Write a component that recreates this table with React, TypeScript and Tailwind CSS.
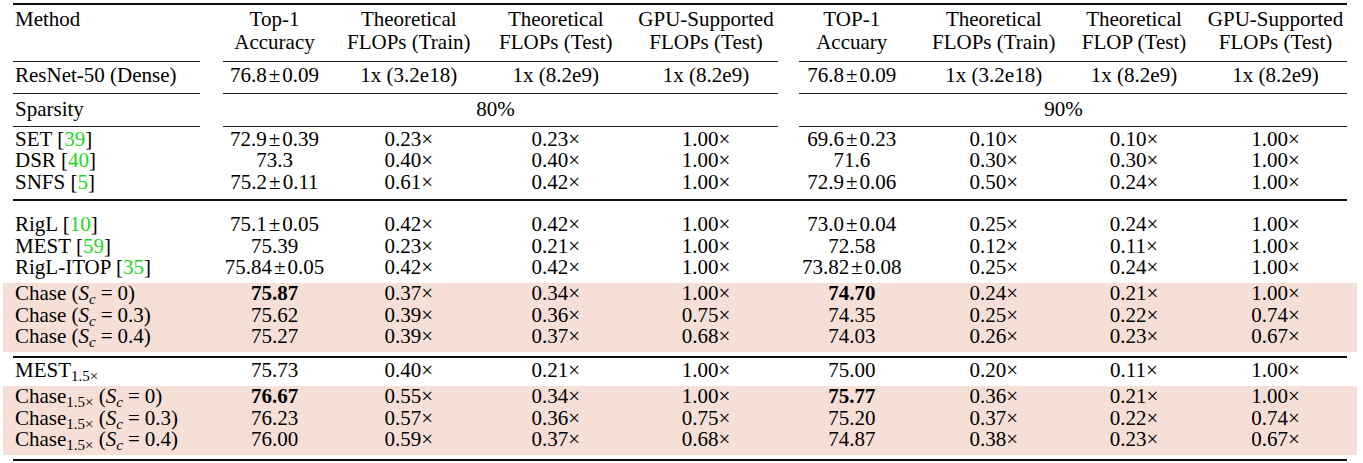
import React from 'react';

const cols =
  'grid grid-cols-[198px_127px_141.5px_152.5px_148px_143.5px_140.5px_140px_143px]';

type Row = {
  method: React.ReactNode;
  vals: React.ReactNode[];
  bold?: number[];
};

function Cite({ n }: { n: number }) {
  return (
    <>
      [<span className="text-[#1ed81e]">{n}</span>]
    </>
  );
}

function Pm({ a, b }: { a: string; b: string }) {
  return (
    <>
      {a}
      <span className="mx-[2px]">±</span>
      {b}
    </>
  );
}

function Sc({ v }: { v: string }) {
  return (
    <>
      (<span className="italic">S</span>
      <span className="text-[15px] italic leading-none align-[-4px]">c</span>
      <span className="mx-[5px]">=</span>
      {v})
    </>
  );
}

function X15() {
  return <span className="text-[15px] leading-none align-[-4px]">1.5×</span>;
}

const sectionA: Row[] = [
  {
    method: <>SET <Cite n={39} /></>,
    vals: [<Pm a="72.9" b="0.39" />, '0.23×', '0.23×', '1.00×', <Pm a="69.6" b="0.23" />, '0.10×', '0.10×', '1.00×'],
  },
  {
    method: <>DSR <Cite n={40} /></>,
    vals: ['73.3', '0.40×', '0.40×', '1.00×', '71.6', '0.30×', '0.30×', '1.00×'],
  },
  {
    method: <>SNFS <Cite n={5} /></>,
    vals: [<Pm a="75.2" b="0.11" />, '0.61×', '0.42×', '1.00×', <Pm a="72.9" b="0.06" />, '0.50×', '0.24×', '1.00×'],
  },
];

const sectionB: Row[] = [
  {
    method: <>RigL <Cite n={10} /></>,
    vals: [<Pm a="75.1" b="0.05" />, '0.42×', '0.42×', '1.00×', <Pm a="73.0" b="0.04" />, '0.25×', '0.24×', '1.00×'],
  },
  {
    method: <>MEST <Cite n={59} /></>,
    vals: ['75.39', '0.23×', '0.21×', '1.00×', '72.58', '0.12×', '0.11×', '1.00×'],
  },
  {
    method: <>RigL-ITOP <Cite n={35} /></>,
    vals: [<Pm a="75.84" b="0.05" />, '0.42×', '0.42×', '1.00×', <Pm a="73.82" b="0.08" />, '0.25×', '0.24×', '1.00×'],
  },
];

const chaseB: Row[] = [
  {
    method: <>Chase <Sc v="0" /></>,
    vals: ['75.87', '0.37×', '0.34×', '1.00×', '74.70', '0.24×', '0.21×', '1.00×'],
    bold: [0, 4],
  },
  {
    method: <>Chase <Sc v="0.3" /></>,
    vals: ['75.62', '0.39×', '0.36×', '0.75×', '74.35', '0.25×', '0.22×', '0.74×'],
  },
  {
    method: <>Chase <Sc v="0.4" /></>,
    vals: ['75.27', '0.39×', '0.37×', '0.68×', '74.03', '0.26×', '0.23×', '0.67×'],
  },
];

const mest15: Row = {
  method: <>MEST<X15 /></>,
  vals: ['75.73', '0.40×', '0.21×', '1.00×', '75.00', '0.20×', '0.11×', '1.00×'],
};

const chaseC: Row[] = [
  {
    method: <>Chase<X15 /> <Sc v="0" /></>,
    vals: ['76.67', '0.55×', '0.34×', '1.00×', '75.77', '0.36×', '0.21×', '1.00×'],
    bold: [0, 4],
  },
  {
    method: <>Chase<X15 /> <Sc v="0.3" /></>,
    vals: ['76.23', '0.57×', '0.36×', '0.75×', '75.20', '0.37×', '0.22×', '0.74×'],
  },
  {
    method: <>Chase<X15 /> <Sc v="0.4" /></>,
    vals: ['76.00', '0.59×', '0.37×', '0.68×', '74.87', '0.38×', '0.23×', '0.67×'],
  },
];

const header: [string, string][] = [
  ['Top-1', 'Accuracy'],
  ['Theoretical', 'FLOPs (Train)'],
  ['Theoretical', 'FLOPs (Test)'],
  ['GPU-Supported', 'FLOPs (Test)'],
  ['TOP-1', 'Accuary'],
  ['Theoretical', 'FLOPs (Train)'],
  ['Theoretical', 'FLOP (Test)'],
  ['GPU-Supported', 'FLOPs (Test)'],
];

function DataRow({ row }: { row: Row }) {
  return (
    <div className={`${cols} h-[21.5px] leading-[21.5px]`}>
      <div className="whitespace-nowrap pl-[2px]">{row.method}</div>
      {row.vals.map((v, i) => (
        <div
          key={i}
          className={`whitespace-nowrap text-center ${row.bold?.includes(i) ? 'font-bold' : ''}`}
        >
          {v}
        </div>
      ))}
    </div>
  );
}

function Shaded({ rows }: { rows: Row[] }) {
  return (
    <div className="-mx-[10px] bg-[#f5dfd6] px-[10px] pb-[4.5px]">
      {rows.map((r, i) => (
        <DataRow key={i} row={r} />
      ))}
    </div>
  );
}

function CmidRule() {
  return (
    <div className="flex h-px">
      <div className="w-[187px] bg-[#222]" />
      <div className="ml-[23px] w-[555px] bg-[#222]" />
      <div className="ml-[21px] w-[548px] bg-[#222]" />
    </div>
  );
}

export default function App() {
  return (
    <div className="h-[463px] w-[1363px] overflow-hidden bg-white font-['Liberation_Serif','Times_New_Roman',serif] text-[21px] text-black">
      <div className="ml-[13px] w-[1334px] pt-[3px]">
        <div className="h-[2px] bg-[#111]" />

        <div className={`${cols} pb-[7px] pt-[3px] leading-[23px]`}>
          <div className="pl-[2px]">Method</div>
          {header.map(([a, b], i) => (
            <div key={i} className="whitespace-nowrap text-center">
              <div>{a}</div>
              <div>{b}</div>
            </div>
          ))}
        </div>
        <CmidRule />

        <div className={`${cols} h-[31px] pt-[3px] leading-[21.5px]`}>
          <div className="whitespace-nowrap pl-[2px]">ResNet-50 (Dense)</div>
          <div className="text-center"><Pm a="76.8" b="0.09" /></div>
          <div className="text-center">1x (3.2e18)</div>
          <div className="text-center">1x (8.2e9)</div>
          <div className="text-center">1x (8.2e9)</div>
          <div className="text-center"><Pm a="76.8" b="0.09" /></div>
          <div className="text-center">1x (3.2e18)</div>
          <div className="text-center">1x (8.2e9)</div>
          <div className="text-center">1x (8.2e9)</div>
        </div>
        <CmidRule />

        <div className={`${cols} h-[32px] pt-[5px] leading-[21.5px]`}>
          <div className="pl-[2px]">Sparsity</div>
          <div className="col-span-4 text-center">80%</div>
          <div className="col-span-4 text-center">90%</div>
        </div>
        <CmidRule />

        <div className="pb-[6px] pt-[1.5px]">
          {sectionA.map((r, i) => (
            <DataRow key={i} row={r} />
          ))}
        </div>
        <div className="h-[2px] bg-[#111]" />

        <div className="pb-[4px] pt-[13px]">
          {sectionB.map((r, i) => (
            <DataRow key={i} row={r} />
          ))}
          <div className="h-[4.5px]" />
          <Shaded rows={chaseB} />
        </div>
        <div className="h-[2px] bg-[#111]" />

        <div className="pb-[4px] pt-[2px]">
          <DataRow row={mest15} />
          <div className="h-[4.5px]" />
          <Shaded rows={chaseC} />
        </div>
        <div className="h-[2px] bg-[#111]" />
      </div>
    </div>
  );
}
